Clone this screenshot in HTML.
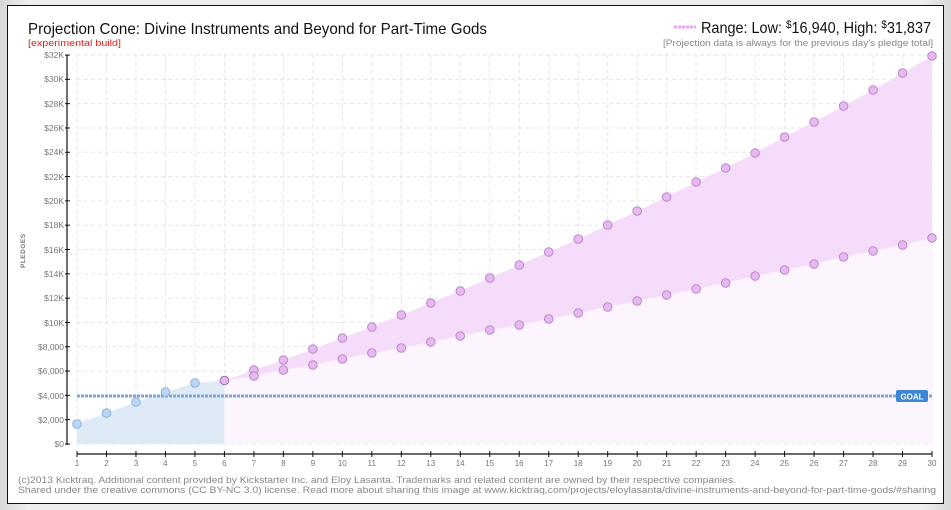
<!DOCTYPE html>
<html><head><meta charset="utf-8"><style>
html,body{margin:0;padding:0;width:951px;height:510px;overflow:hidden;background:linear-gradient(90deg,#d8d8d8,#eeeeee 3%,#eeeeee 97%,#d8d8d8);font-family:"Liberation Sans",sans-serif}
#box{position:absolute;left:7px;top:5px;width:935px;height:497px;border:1px solid #111;background:#fff}
svg{position:absolute;left:0;top:0}
text{font-family:"Liberation Sans",sans-serif}
</style></head><body>
<div id="box"></div>
<svg id="s" width="951" height="510" xmlns="http://www.w3.org/2000/svg">
<g id="grid"></g>
<g id="areas"></g>
<line x1="77" y1="396" x2="932" y2="396" stroke="#7fa6d8" stroke-width="3" stroke-dasharray="3,1"/>
<line x1="67" y1="55" x2="67" y2="445" stroke="#111" stroke-width="1.2"/>
<line x1="77" y1="454" x2="932" y2="454" stroke="#111" stroke-width="1.2"/>
<g id="ticks"></g>
<g id="pts"></g>
<rect x="896" y="390" width="32" height="12" rx="2" fill="#3b87d6"/>
<text x="912" y="399.5" font-size="8" fill="#fff" text-anchor="middle" font-weight="bold">GOAL</text>
<text x="28" y="34" font-size="16" fill="#111" textLength="459" lengthAdjust="spacingAndGlyphs">Projection Cone: Divine Instruments and Beyond for Part-Time Gods</text>
<text x="28" y="46" font-size="9" fill="#e02020" textLength="93" lengthAdjust="spacingAndGlyphs">[experimental build]</text>
<line x1="674" y1="27" x2="696" y2="27" stroke="#e8a8f0" stroke-width="3" stroke-dasharray="3,1"/>
<text x="701" y="33" font-size="16" fill="#111" textLength="230" lengthAdjust="spacingAndGlyphs">Range: Low: <tspan font-size="11" dy="-5">$</tspan><tspan dy="5">16,940, High: </tspan><tspan font-size="11" dy="-5">$</tspan><tspan dy="5">31,837</tspan></text>
<text x="663" y="46" font-size="9" fill="#888" textLength="270" lengthAdjust="spacingAndGlyphs">[Projection data is always for the previous day's pledge total]</text>
<text transform="translate(25,268) rotate(-90)" font-size="6.5" fill="#777" font-weight="bold" letter-spacing="0.5">PLEDGES</text>
<g font-size="8.5" fill="#777" text-anchor="end">
<text x="64" y="447">$0</text><text x="64" y="423">$2,000</text><text x="64" y="399">$4,000</text><text x="64" y="374">$6,000</text><text x="64" y="350">$8,000</text><text x="64" y="326">$10K</text><text x="64" y="301">$12K</text><text x="64" y="277">$14K</text><text x="64" y="253">$16K</text><text x="64" y="228">$18K</text><text x="64" y="204">$20K</text><text x="64" y="180">$22K</text><text x="64" y="155">$24K</text><text x="64" y="131">$26K</text><text x="64" y="107">$28K</text><text x="64" y="82">$30K</text><text x="64" y="58">$32K</text>
</g>
<g font-size="8" fill="#777" text-anchor="middle">
<text x="77" y="466">1</text><text x="106.5" y="466">2</text><text x="136" y="466">3</text><text x="165.4" y="466">4</text><text x="194.9" y="466">5</text><text x="224.4" y="466">6</text><text x="253.9" y="466">7</text><text x="283.4" y="466">8</text><text x="312.8" y="466">9</text><text x="342.3" y="466">10</text><text x="371.8" y="466">11</text><text x="401.3" y="466">12</text><text x="430.8" y="466">13</text><text x="460.2" y="466">14</text><text x="489.7" y="466">15</text><text x="519.2" y="466">16</text><text x="548.7" y="466">17</text><text x="578.2" y="466">18</text><text x="607.6" y="466">19</text><text x="637.1" y="466">20</text><text x="666.6" y="466">21</text><text x="696.1" y="466">22</text><text x="725.6" y="466">23</text><text x="755" y="466">24</text><text x="784.5" y="466">25</text><text x="814" y="466">26</text><text x="843.5" y="466">27</text><text x="873" y="466">28</text><text x="902.4" y="466">29</text><text x="932" y="466">30</text>
</g>
<g font-size="9" fill="#888">
<text x="18" y="483" textLength="718" lengthAdjust="spacingAndGlyphs">(c)2013 Kicktraq. Additional content provided by Kickstarter Inc. and Eloy Lasanta. Trademarks and related content are owned by their respective companies.</text>
<text x="18" y="493" textLength="918" lengthAdjust="spacingAndGlyphs">Shared under the creative commons (CC BY-NC 3.0) license. Read more about sharing this image at www.kicktraq.com/projects/eloylasanta/divine-instruments-and-beyond-for-part-time-gods/#sharing</text>
</g>
</svg>
<script>
var NS="http://www.w3.org/2000/svg";
function el(p,t,a){var e=document.createElementNS(NS,t);for(var k in a)e.setAttribute(k,a[k]);document.getElementById(p).appendChild(e);return e;}
function X(d){return 77+(d-1)*29.483;}
for(var d=1;d<=30;d++){el("grid","line",{x1:X(d),y1:55,x2:X(d),y2:444,stroke:"#e6e6e6","stroke-dasharray":"4,3"});
el("ticks","line",{x1:X(d),y1:451,x2:X(d),y2:457,stroke:"#111"});}
for(var k=0;k<=16;k++){var y=444-k*24.31;el("grid","line",{x1:77,y1:y,x2:932,y2:y,stroke:"#e6e6e6","stroke-dasharray":"4,3"});
el("ticks","line",{x1:65,y1:y,x2:70,y2:y,stroke:"#111"});}
var blue=[424,413,402,392,383,380.5];
var hi=[370,360,349,338,327,315,303,291,278,265,252,239,225,211,197,182,168,153,137,122,106,90,73,56];
var lo=[376,370,365,359,353,348,342,336,330,325,319,313,307,301,295,289,283,276,270,264,257,251,245,238];
var p="M"+X(6)+",444 L"+X(6)+",380.5";for(var i=0;i<24;i++)p+=" L"+X(i+7)+","+lo[i];p+=" L"+X(30)+",444 Z";
el("areas","path",{d:p,fill:"#fcf5fe"});
var c="M"+X(6)+",380.5";for(var i=0;i<24;i++)c+=" L"+X(i+7)+","+hi[i];for(var i=23;i>=0;i--)c+=" L"+X(i+7)+","+lo[i];c+=" Z";
el("areas","path",{d:c,fill:"#f6dcfb"});
var b="M"+X(1)+",444";for(var i=0;i<6;i++)b+=" L"+X(i+1)+","+blue[i];b+=" L"+X(6)+",444 Z";
el("areas","path",{d:b,fill:"#dfeaf7"});
for(var i=0;i<5;i++)el("pts","circle",{cx:X(i+1),cy:blue[i],r:4.3,fill:"#bcd6f5",stroke:"#8fb2de"});
for(var i=0;i<24;i++){el("pts","circle",{cx:X(i+7),cy:hi[i],r:4.3,fill:"#e8b8f2",stroke:"#b98ac8"});el("pts","circle",{cx:X(i+7),cy:lo[i],r:4.3,fill:"#e8b8f2",stroke:"#b98ac8"});}
el("pts","circle",{cx:X(6),cy:380.5,r:4.3,fill:"#e8b8f2",stroke:"#a070b0"});
</script>
</body></html>
